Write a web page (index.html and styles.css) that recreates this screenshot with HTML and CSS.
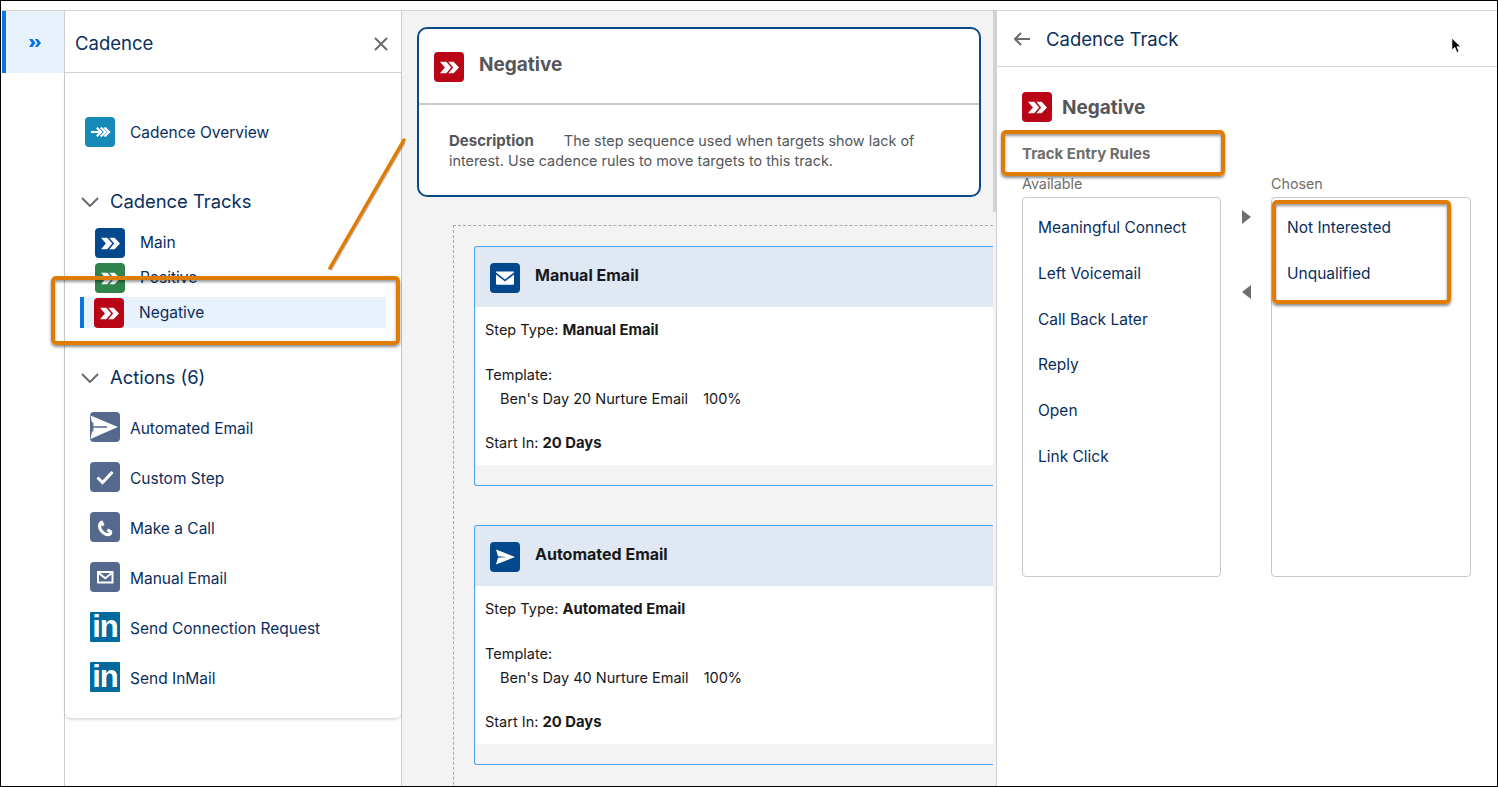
FILE: index.html
```html
<!DOCTYPE html>
<html lang="en">
<head>
<meta charset="utf-8">
<title>Cadence</title>
<link rel="stylesheet" href="styles.css">
</head>
<body>
<svg class="defs" width="0" height="0" aria-hidden="true">
  <symbol id="chev" viewBox="0 0 30 30"><path d="M6 9.800h6.200l5 5.700-5 5.700H6l4.900-5.700zM14.300 9.800h5.300l5.400 5.700-5.400 5.700h-5.300l4.900-5.700z" fill="#fff"/></symbol>
  <symbol id="send" viewBox="0 0 30 30"><path d="M6 7.500 25 15 6 22.500l2-6.800 9-.7-9-.7z" fill="#fff"/></symbol>
  <symbol id="send-large" viewBox="0 0 30 30"><path d="M.5 3.500 28 15 .5 27l2.400-12z" fill="#fff"/><path d="M2.800 10.500v9M2.800 15H17" fill="none" stroke="#54698d" stroke-width="1.300"/></symbol>
  <symbol id="mail" viewBox="0 0 30 30"><path d="M6.500 8.500h17c.6 0 .8.500.4.900L15 16.400 6.100 9.400c-.4-.4-.2-.9.400-.9zM6 11.500l9 7 9-7v9c0 .8-.5 1.300-1.300 1.300H7.300c-.8 0-1.300-.5-1.300-1.300z" fill="#fff"/></symbol>
  <symbol id="mail-outline" viewBox="0 0 30 30"><rect x="8" y="10" width="14.500" height="10.500" fill="none" stroke="#fff" stroke-width="2"/><path d="M8 10.500l7.250 5.800 7.250-5.800" fill="none" stroke="#fff" stroke-width="2"/></symbol>
  <symbol id="check" viewBox="0 0 30 30"><path d="M7.500 15.500l5 5 10-10.500" fill="none" stroke="#fff" stroke-width="3"/></symbol>
  <symbol id="phone" viewBox="0 0 30 30"><path d="M11.500 10.500C8.800 12 9 16 11.500 19c2.500 3 6 5 9 2.500" fill="none" stroke="#fff" stroke-width="3.200" stroke-linecap="round"/><path d="M10 9.500l2.500-1 2 4.500-2.500 1.500zM16.500 19l1.500-2.500 4.500 2.500-1.500 2.500z" fill="#fff"/></symbol>
  <symbol id="overview" viewBox="0 0 30 30"><path d="M6 15h10M11.800 10.800 16 15l-4.200 4.200M15.800 10.500l4.500 4.500-4.500 4.500M19.500 10.500 24 15l-4.500 4.500" fill="none" stroke="#fff" stroke-width="2.200"/></symbol>
</svg>
<div class="frame">
  <div class="panes">
    <nav class="rail">
      <div class="rail-cell">
        <svg class="rail-icon" viewBox="0 0 12 8"><path d="M0 0h3.500L6.500 4l-3 4H0l2.800-4zM5.800 0h3L12 4 8.800 8h-3l2.800-4z" fill="#0b74de"/></svg>
      </div>
    </nav>

    <aside class="sidebar">
      <header class="side-head">
        <h1 class="side-title">Cadence</h1>
        <svg class="close" viewBox="0 0 14 14"><path d="M1 1l12 12M13 1 1 13" fill="none" stroke="#6b6b6b" stroke-width="2"/></svg>
      </header>
      <div class="side-card">
        <div class="row row-overview">
          <span class="tile tile-teal"><svg class="glyph"><use href="#overview"/></svg></span>
          <span class="row-label">Cadence Overview</span>
        </div>

        <div class="section-head section-tracks">
          <svg class="caret" viewBox="0 0 18 10"><path d="M1 1l8 8 8-8" fill="none" stroke="#6b6b6b" stroke-width="2"/></svg>
          <h2 class="section-title">Cadence Tracks</h2>
        </div>
        <div class="track track-main">
          <span class="tile tile-navy"><svg class="glyph"><use href="#chev"/></svg></span>
          <span class="track-label">Main</span>
        </div>
        <div class="track track-positive">
          <span class="tile tile-green"><svg class="glyph"><use href="#chev"/></svg></span>
          <span class="track-label">Positive</span>
        </div>
        <div class="track track-active">
          <span class="tile tile-red"><svg class="glyph"><use href="#chev"/></svg></span>
          <span class="track-label">Negative</span>
        </div>

        <div class="section-head section-actions">
          <svg class="caret" viewBox="0 0 18 10"><path d="M1 1l8 8 8-8" fill="none" stroke="#6b6b6b" stroke-width="2"/></svg>
          <h2 class="section-title">Actions (6)</h2>
        </div>
        <ul class="actions">
          <li class="row"><span class="tile tile-slate"><svg class="glyph"><use href="#send-large"/></svg></span><span class="row-label">Automated Email</span></li>
          <li class="row"><span class="tile tile-slate"><svg class="glyph"><use href="#check"/></svg></span><span class="row-label">Custom Step</span></li>
          <li class="row"><span class="tile tile-slate"><svg class="glyph"><use href="#phone"/></svg></span><span class="row-label">Make a Call</span></li>
          <li class="row"><span class="tile tile-slate"><svg class="glyph"><use href="#mail-outline"/></svg></span><span class="row-label">Manual Email</span></li>
          <li class="row"><span class="tile tile-in">in</span><span class="row-label">Send Connection Request</span></li>
          <li class="row"><span class="tile tile-in">in</span><span class="row-label">Send InMail</span></li>
        </ul>
      </div>
    </aside>

    <main class="canvas">
      <section class="track-card">
        <div class="track-card-head">
          <span class="tile tile-red"><svg class="glyph"><use href="#chev"/></svg></span>
          <h2 class="heading-gray">Negative</h2>
        </div>
        <p class="track-card-body"><b class="desc-label">Description</b>The step sequence used when targets show lack of interest. Use cadence rules to move targets to this track.</p>
      </section>

      <div class="dropzone">
        <article class="step">
          <div class="step-head">
            <span class="tile tile-navy"><svg class="glyph"><use href="#mail"/></svg></span>
            <h3 class="step-title">Manual Email</h3>
          </div>
          <div class="step-body">
            <p class="line">Step Type: <b>Manual Email</b></p>
            <p class="line line-gap">Template:</p>
            <p class="line line-template"><span class="tpl-name">Ben's Day 20 Nurture Email</span>100%</p>
            <p class="line line-start">Start In: <b>20 Days</b></p>
          </div>
        </article>
        <article class="step">
          <div class="step-head">
            <span class="tile tile-navy"><svg class="glyph"><use href="#send"/></svg></span>
            <h3 class="step-title">Automated Email</h3>
          </div>
          <div class="step-body">
            <p class="line">Step Type: <b>Automated Email</b></p>
            <p class="line line-gap">Template:</p>
            <p class="line line-template"><span class="tpl-name">Ben's Day 40 Nurture Email</span>100%</p>
            <p class="line line-start">Start In: <b>20 Days</b></p>
          </div>
        </article>
      </div>
      <span class="scroll-thumb"></span>
    </main>

    <aside class="detail">
      <header class="detail-head">
        <svg class="back" viewBox="0 0 16 14"><path d="M7 1 1 7l6 6M1 7h15" fill="none" stroke="#6b6b6b" stroke-width="2"/></svg>
        <h2 class="detail-title">Cadence Track</h2>
      </header>
      <div class="detail-body">
        <div class="detail-name">
          <span class="tile tile-red"><svg class="glyph"><use href="#chev"/></svg></span>
          <h2 class="heading-gray">Negative</h2>
        </div>
        <h3 class="rules-title">Track Entry Rules</h3>
        <div class="dual">
          <div class="dual-col dual-avail">
            <div class="dual-label">Available</div>
            <ul class="listbox">
              <li>Meaningful Connect</li>
              <li>Left Voicemail</li>
              <li>Call Back Later</li>
              <li>Reply</li>
              <li>Open</li>
              <li>Link Click</li>
            </ul>
          </div>
          <div class="dual-arrows">
            <svg class="arrow" viewBox="0 0 9 14"><path d="M0 0l9 7-9 7z" fill="#6e6e6e"/></svg>
            <svg class="arrow arrow-left" viewBox="0 0 9 14"><path d="M9 0 0 7l9 7z" fill="#6e6e6e"/></svg>
          </div>
          <div class="dual-col dual-chosen">
            <div class="dual-label">Chosen</div>
            <ul class="listbox">
              <li>Not Interested</li>
              <li>Unqualified</li>
            </ul>
          </div>
        </div>
      </div>
    </aside>
  </div>
</div>

<div class="callout callout-track"></div>
<div class="callout callout-rules"></div>
<div class="callout callout-chosen"></div>
<svg class="leader" viewBox="0 0 1498 787"><path class="leader-shadow" d="M404 142 330 270"/><path class="leader-line" d="M404 140 330 268"/></svg>
<svg class="cursor" viewBox="0 0 12 18"><path d="M1 1v13l3.200-3 2.300 5.500 2.200-1-2.300-5.200H10.500z" fill="#000" stroke="#fff" stroke-width=".8"/></svg>
</body>
</html>
```
FILE: styles.css
```css
* { box-sizing: border-box; }
html, body { margin: 0; padding: 0; }
body {
  width: 1498px;
  height: 787px;
  overflow: hidden;
  position: relative;
  background: #fff;
  font-family: Inter, "Noto Sans", sans-serif;
  color: #0a2e5c;
}
h1, h2, h3, p, ul { margin: 0; padding: 0; font-weight: 400; }
ul { list-style: none; }
.defs { position: absolute; }

.frame {
  height: 787px;
  border: 1px solid #000;
  padding-top: 9px;
}
.panes {
  display: flex;
  height: 776px;
  border-top: 1px solid #d4d4d4;
}

/* rail */
.rail {
  width: 64px;
  flex: none;
  padding-left: 1px;
  border-right: 1px solid #cfcfcf;
}
.rail-cell {
  height: 62px;
  background: #e8f2fc;
  border-left: 4px solid #0b74de;
  display: flex;
  align-items: center;
  justify-content: center;
}
.rail-icon { width: 12px; height: 8px; margin-top: 1px; }

/* sidebar */
.sidebar {
  width: 337px;
  flex: none;
  border-right: 1px solid #cfcfcf;
}
.side-head {
  height: 62px;
  display: flex;
  align-items: center;
  justify-content: space-between;
  padding: 2px 13px 0 10px;
  border-bottom: 1px solid #d4d4d4;
}
.side-title { font-size: 18.500px; color: #0a2e5c; }
.close { width: 14px; height: 14px; margin-top: 2px; }
.side-card {
  height: 645px;
  padding: 44px 0 0 0;
  border-radius: 0 0 6px 6px;
  box-shadow: 0 2px 3px rgba(0,0,0,.14);
}
.row { display: flex; align-items: center; height: 30px; }
.row-label { font-size: 15.500px; line-height: 30px; }
.row-overview { padding-left: 20px; }
.row-overview .row-label { margin: 1px 0 0 15px; }

.tile {
  width: 30px;
  height: 30px;
  flex: none;
  display: inline-flex;
  align-items: center;
  justify-content: center;
  border-radius: 4px;
}
.glyph { width: 30px; height: 30px; display: block; }
.tile-teal { background: #1589b8; }
.tile-navy { background: #03478c; }
.tile-green { background: #2e844a; }
.tile-red { background: #ba0517; }
.tile-slate { background: #54698d; }
.tile-in {
  background: #006a9f;
  border-radius: 1px;
  color: #fff;
  font-family: "Liberation Sans", sans-serif;
  font-weight: 700;
  font-size: 31px;
  line-height: 30px;
  letter-spacing: -1px;
}

.section-head { display: flex; align-items: center; height: 26px; padding-left: 16px; }
.section-title { font-size: 18.400px; line-height: 26px; margin: 1px 0 0 11px; }
.caret { width: 18px; height: 10px; margin-top: 4px; }
.section-tracks { margin-top: 40px; }
.section-actions { margin-top: 35px; }

.track { display: flex; align-items: center; height: 30px; }
.track-label { font-size: 15.500px; margin: -2px 0 0 15px; }
.track-main { margin-top: 15px; padding-left: 30px; }
.track-positive { margin-top: 5px; padding-left: 30px; }
.track-active {
  margin: 4px 15px 0 15px;
  height: 31px;
  background: #e8f2fc;
  border-left: 4px solid #0b74de;
  padding-left: 10px;
}
.track-active .track-label { margin-top: 0; }
.actions {
  margin-top: 23px;
  padding-left: 25px;
  display: flex;
  flex-direction: column;
  gap: 20px;
}
.actions .row-label { margin: 4px 0 0 10px; }

/* canvas */
.canvas {
  flex: 1;
  min-width: 0;
  position: relative;
  overflow: hidden;
  background: #f3f3f3;
  padding: 16px 3px 0 15px;
}
.track-card {
  width: 564px;
  height: 170px;
  background: #fff;
  border: 2px solid #0b4a8a;
  border-radius: 10px;
}
.track-card-head {
  height: 76px;
  display: flex;
  align-items: center;
  padding: 2px 0 0 15px;
  border-bottom: 2px solid #c9c9c9;
}
.heading-gray { font-size: 19px; font-weight: 700; color: #54565a; margin-left: 15px; }
.track-card-head .heading-gray { margin-top: -6px; }
.track-card-body {
  padding: 26px 30px 0 30px;
  font-size: 14.400px;
  line-height: 20px;
  color: #54565a;
}
.desc-label { font-weight: 700; font-size: 15px; margin-right: 30px; }

.dropzone {
  margin: 28px 0 0 36px;
  height: 600px;
  border: 1px dashed #a9a9a9;
  border-right: 0;
  padding: 20px 0 0 20px;
  overflow: hidden;
}
.step {
  height: 240px;
  margin-bottom: 39px;
  background: #f3f3f3;
  border: 1px solid #4ea3f0;
  border-right: 0;
  border-radius: 3px 0 0 3px;
  overflow: hidden;
}
.step-head {
  height: 60px;
  background: #dfe8f3;
  display: flex;
  align-items: center;
  padding: 2px 0 0 15px;
}
.step-title { font-size: 16px; font-weight: 700; color: #181818; margin: -7px 0 0 15px; }
.step-body {
  height: 158px;
  background: #fff;
  padding: 12px 0 0 10px;
  color: #181818;
  font-size: 14.500px;
  line-height: 22px;
}
.line b { font-weight: 700; font-size: 14.800px; }
.line-gap { margin-top: 23px; }
.line-template { margin-top: 2px; padding-left: 15px; }
.tpl-name { margin-right: 15px; }
.line-start { margin-top: 22px; }
.scroll-thumb {
  position: absolute;
  right: 0;
  top: 0;
  width: 3px;
  height: 201px;
  background: #d2d2d2;
}

/* detail */
.detail {
  width: 501px;
  flex: none;
  border-left: 1px solid #cfcfcf;
}
.detail-head {
  height: 56px;
  display: flex;
  align-items: center;
  padding-left: 17px;
  border-bottom: 1px solid #d4d4d4;
}
.back { width: 16px; height: 14px; }
.detail-title { font-size: 18.500px; color: #0a2e5c; margin-left: 16px; }
.detail-body { padding: 25px 26px 0 25px; }
.detail-name { display: flex; align-items: center; }
.detail-name .heading-gray { margin-left: 10px; }
.rules-title { font-size: 15px; font-weight: 700; color: #706e6b; line-height: 20px; margin-top: 22px; }
.dual { display: flex; margin-top: 10px; }
.dual-col { flex: none; }
.dual-avail { width: 199px; }
.dual-chosen { width: 200px; }
.dual-label { font-size: 14.300px; line-height: 20px; color: #706e6b; }
.dual-arrows {
  width: 50px;
  flex: none;
  display: flex;
  flex-direction: column;
  align-items: center;
  padding: 36px 0 0 1px;
}
.arrow { width: 9px; height: 14px; }
.arrow-left { margin-top: 61px; }
.listbox {
  height: 380px;
  margin-top: 3px;
  border: 1px solid #c9c9c9;
  border-radius: 4px;
  padding: 7px 0 0 15px;
  font-size: 15.500px;
}
.listbox li { height: 45.800px; line-height: 46px; }

/* annotations */
.callout {
  position: absolute;
  border: 4px solid #df7c05;
  border-radius: 5px;
  box-shadow: 0 2px 3px rgba(0,0,0,.45), inset 0 2px 3px rgba(0,0,0,.4);
}
.callout-track { left: 51px; top: 276px; width: 349px; height: 69px; }
.callout-rules { left: 1001px; top: 130px; width: 224px; height: 46px; }
.callout-chosen { left: 1272px; top: 200px; width: 179px; height: 104px; }
.leader { position: absolute; left: 0; top: 0; width: 1498px; height: 787px; pointer-events: none; }
.leader-line { stroke: #df7c05; stroke-width: 3.500; stroke-linecap: round; fill: none; }
.leader-shadow { stroke: rgba(0,0,0,.22); stroke-width: 4; fill: none; }
.cursor { position: absolute; left: 1451px; top: 37px; width: 11px; height: 17px; }
```
